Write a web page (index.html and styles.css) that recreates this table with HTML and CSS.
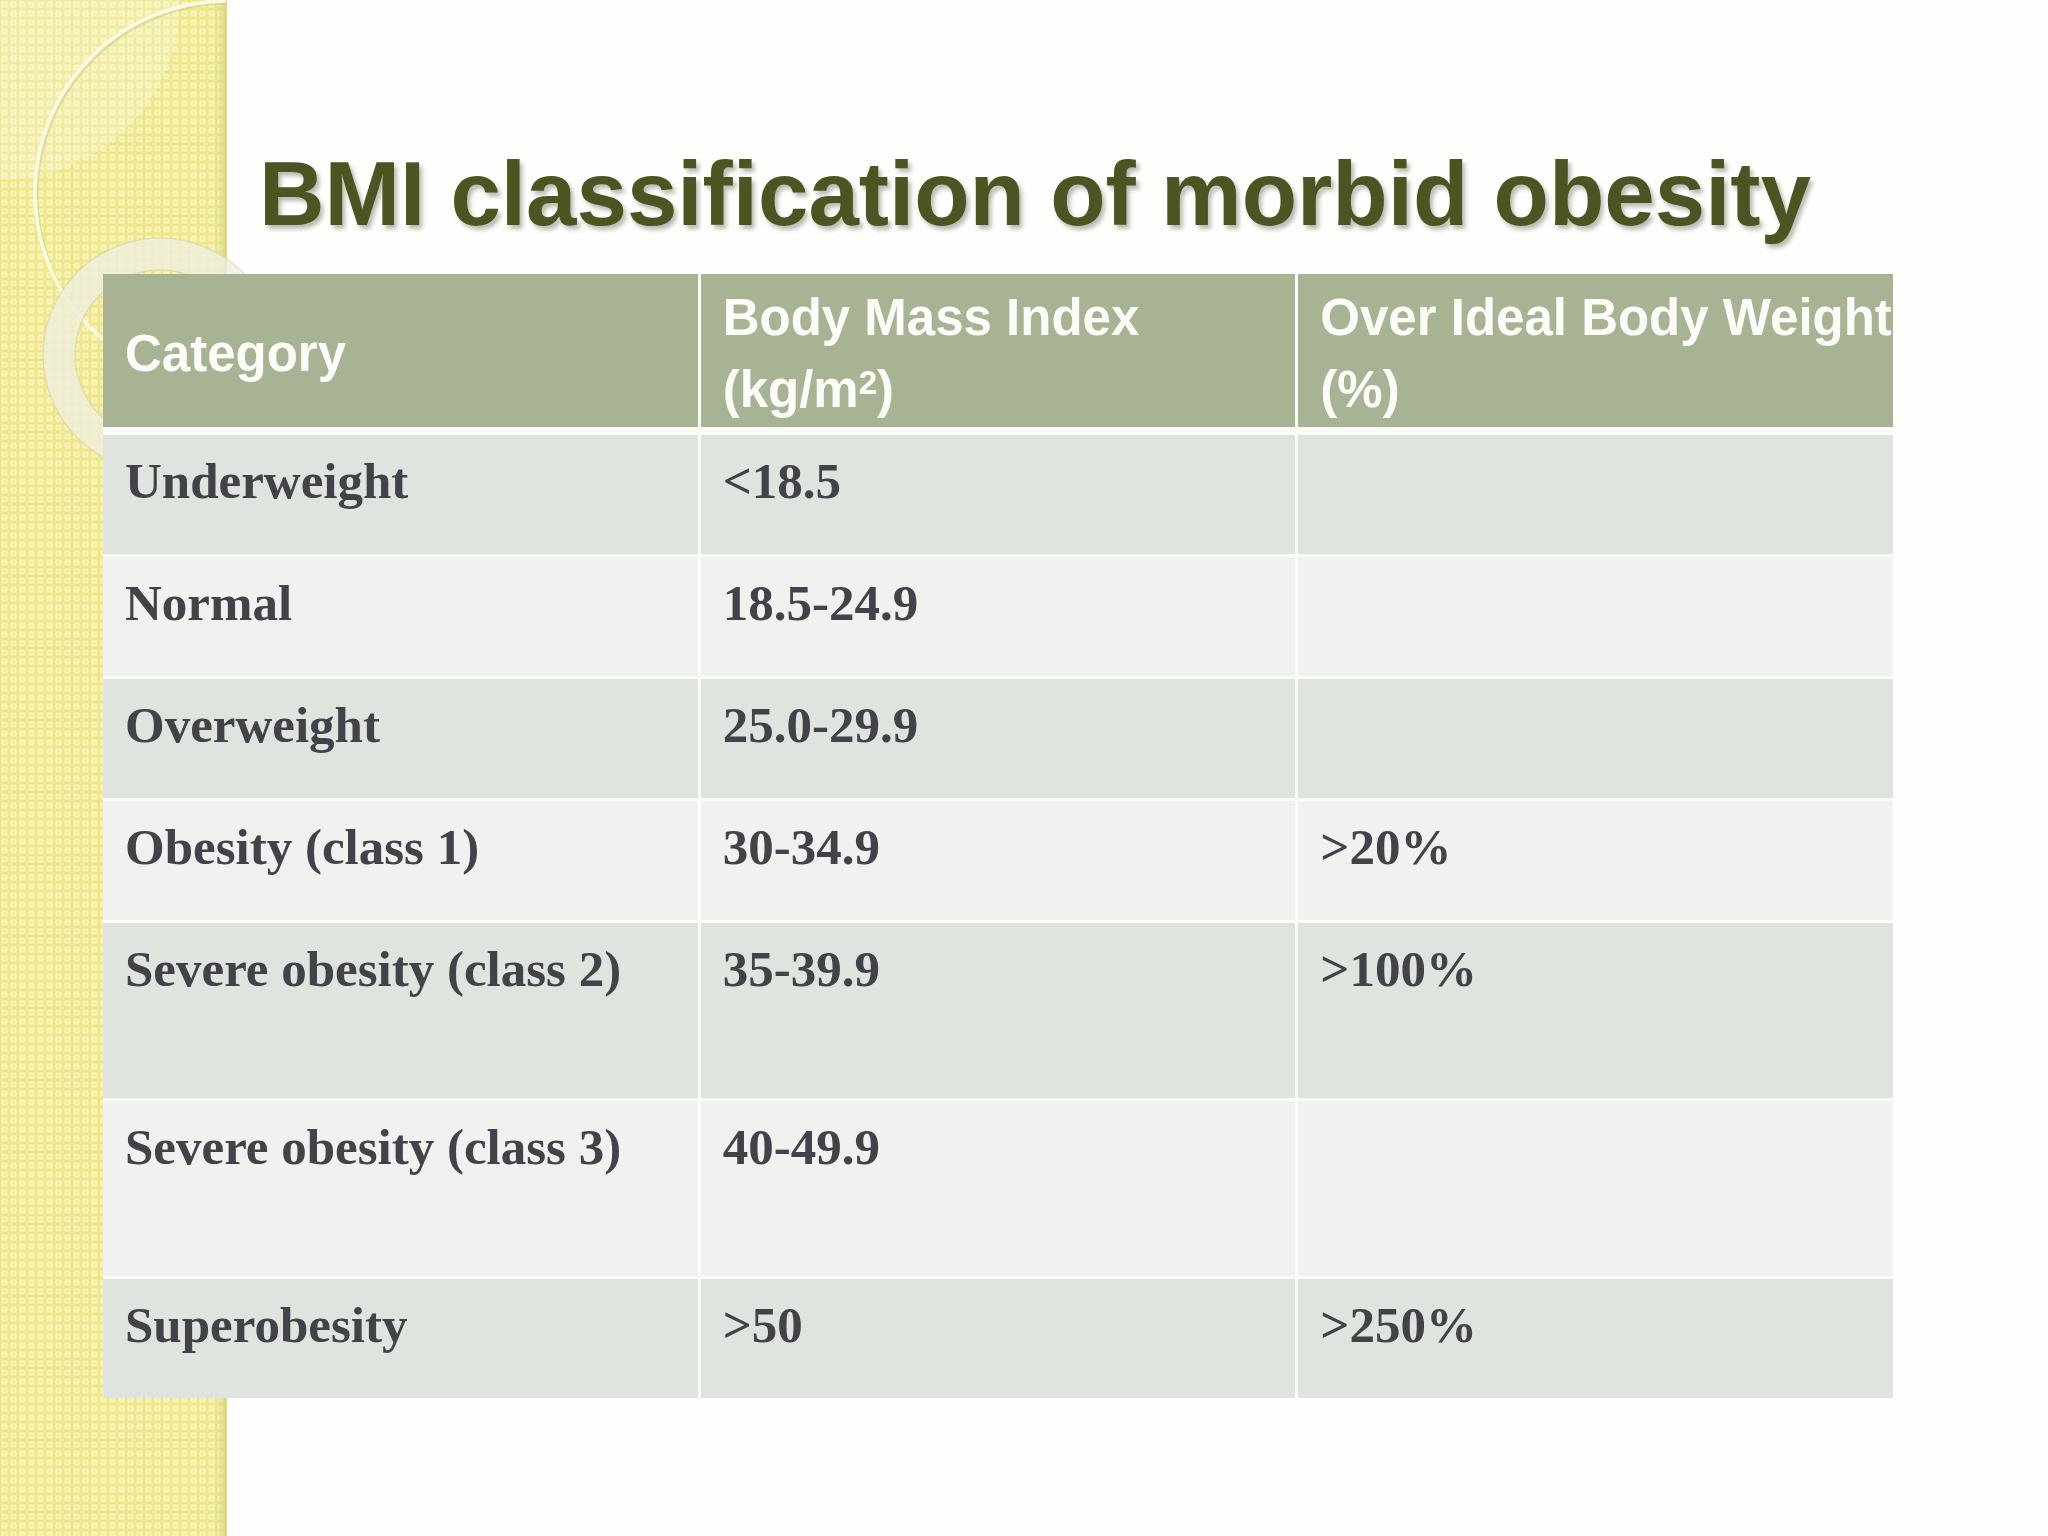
FILE: index.html
```html
<!DOCTYPE html>
<html lang="en">
<head>
<meta charset="utf-8">
<title>BMI classification of morbid obesity</title>
<link rel="stylesheet" href="styles.css">
</head>
<body>
<div class="slide">
  <div class="strip" aria-hidden="true">
    <svg class="ornament" width="300" height="520" viewBox="0 0 300 520">
      <defs>
        <clipPath id="stripClip"><rect x="0" y="0" width="226" height="520"/></clipPath>
      </defs>
      <g clip-path="url(#stripClip)">
        <circle cx="0" cy="0" r="180" fill="#ffffff" fill-opacity="0.22"/>
        <circle cx="229" cy="195" r="192" fill="none" stroke="#c9c98a" stroke-opacity="0.5" stroke-width="3"/>
        <circle cx="227" cy="193" r="192" fill="none" stroke="#fdfbe6" stroke-opacity="0.95" stroke-width="3.5"/>
      </g>
      <circle cx="160" cy="355" r="101" fill="none" stroke="#efefdf" stroke-opacity="0.8" stroke-width="32"/>
      <circle cx="160" cy="355" r="117" fill="none" stroke="#d4d4a8" stroke-opacity="0.6" stroke-width="1.5"/>
      <circle cx="160" cy="355" r="85" fill="none" stroke="#d4d4a8" stroke-opacity="0.6" stroke-width="1.5"/>
    </svg>
  </div>

  <main class="content">
    <h1 class="title">BMI classification of morbid obesity</h1>

    <div class="bmi-table">
      <div class="thead">
        <div class="th"><span class="th-text">Category</span></div>
        <div class="th"><span class="th-text">Body Mass Index<br>(kg/m<sup>2</sup>)</span></div>
        <div class="th"><span class="th-text">Over Ideal Body Weight<br>(%)</span></div>
      </div>
      <div class="tbody">
        <div class="td row-a">Underweight</div>
        <div class="td row-a">&lt;18.5</div>
        <div class="td row-a"></div>

        <div class="td row-b">Normal</div>
        <div class="td row-b">18.5-24.9</div>
        <div class="td row-b"></div>

        <div class="td row-a">Overweight</div>
        <div class="td row-a">25.0-29.9</div>
        <div class="td row-a"></div>

        <div class="td row-b">Obesity (class 1)</div>
        <div class="td row-b">30-34.9</div>
        <div class="td row-b">&gt;20%</div>

        <div class="td row-a">Severe obesity (class 2)</div>
        <div class="td row-a">35-39.9</div>
        <div class="td row-a">&gt;100%</div>

        <div class="td row-b">Severe obesity (class 3)</div>
        <div class="td row-b">40-49.9</div>
        <div class="td row-b"></div>

        <div class="td row-a">Superobesity</div>
        <div class="td row-a">&gt;50</div>
        <div class="td row-a">&gt;250%</div>
      </div>
    </div>
  </main>
</div>
</body>
</html>
```

FILE: styles.css
```css
* {
  box-sizing: border-box;
}

html,
body {
  margin: 0;
  padding: 0;
  background: #ffffff;
}

.slide {
  position: relative;
  width: 2048px;
  height: 1536px;
  overflow: hidden;
  background: #fefffd;
}

/* decorative left band, lying under the content */
.strip {
  position: absolute;
  left: 0;
  top: 0;
  width: 227px;
  height: 1536px;
  background-color: #f1ea92;
  background-image:
    linear-gradient(90deg, rgba(0, 0, 0, 0) 215px, rgba(185, 190, 105, 0.45) 227px),
    url("data:image/svg+xml,%3Csvg xmlns='http://www.w3.org/2000/svg' width='9' height='9'%3E%3Crect width='9' height='9' fill='%23eee78a'/%3E%3Crect x='1.5' y='1.5' width='6' height='6' fill='%23f8f4bb'/%3E%3Crect x='3.5' y='3.5' width='2' height='2' fill='%23efe895'/%3E%3C/svg%3E");
  background-size: 227px 100%, 9px 9px;
  background-repeat: no-repeat, repeat;
}

.ornament {
  position: absolute;
  left: 0;
  top: 0;
  z-index: 1;
  overflow: visible;
}

.content {
  position: relative;
  z-index: 2;
  padding: 142px 0 0 103px;
}

.title {
  margin: 0 0 28px 156px;
  font-family: "Liberation Sans", Arial, sans-serif;
  font-weight: 700;
  font-size: 90.7px;
  line-height: 104px;
  color: #4a5521;
  white-space: nowrap;
  text-shadow: 3px 4px 4px rgba(60, 60, 40, 0.35);
}

.bmi-table {
  width: 1790px;
  background: #fafcf8;
}

.thead,
.tbody {
  display: grid;
  grid-template-columns: repeat(3, 1fr);
  column-gap: 3px;
}

.thead {
  height: 153px;
}

.tbody {
  margin-top: 8px;
  row-gap: 3px;
  grid-template-rows: repeat(4, 119px) 175px 175px 119px;
}

.th {
  display: flex;
  align-items: center;
  padding: 6px 0 0 22px;
  background: #a8b394;
  color: #fcfdf8;
  font-family: "Liberation Sans", Arial, sans-serif;
  font-weight: 700;
  font-size: 51px;
  line-height: 72px;
  white-space: nowrap;
}

.th-text {
  display: block;
}

.th-text sup {
  font-size: 33px;
  line-height: 0;
  vertical-align: 13px;
}

.td {
  padding: 10px 0 0 22px;
  color: #414349;
  font-family: "Liberation Serif", "Times New Roman", serif;
  font-weight: 700;
  font-size: 51px;
  line-height: 72px;
  white-space: nowrap;
}

.row-a {
  background: #e0e4df;
}

.row-b {
  background: #eff2ee;
}
```
